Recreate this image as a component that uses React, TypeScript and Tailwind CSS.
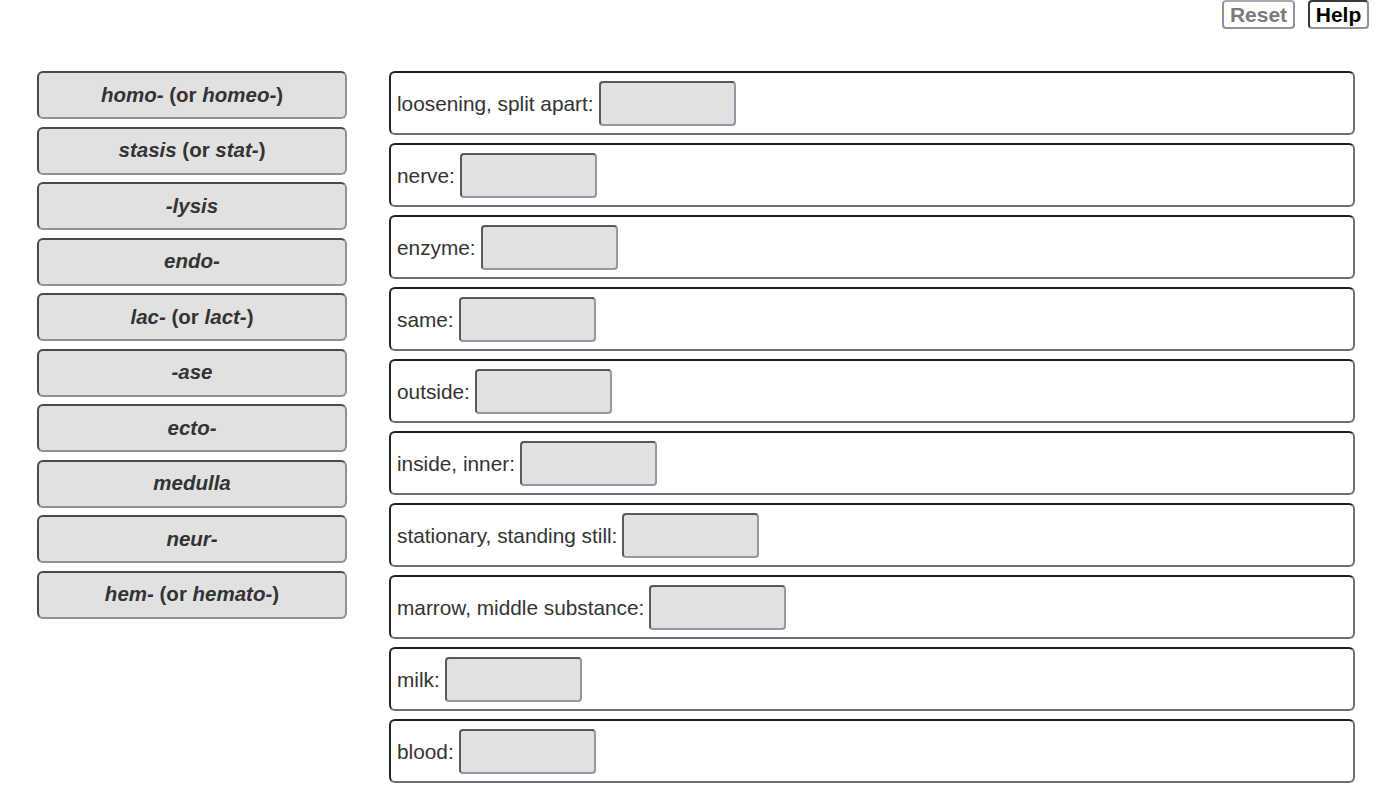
import React from "react";

const terms: { parts: { t: string; i?: boolean }[] }[] = [
  { parts: [{ t: "homo-", i: true }, { t: " (or " }, { t: "homeo-", i: true }, { t: ")" }] },
  { parts: [{ t: "stasis", i: true }, { t: " (or " }, { t: "stat-", i: true }, { t: ")" }] },
  { parts: [{ t: "-lysis", i: true }] },
  { parts: [{ t: "endo-", i: true }] },
  { parts: [{ t: "lac-", i: true }, { t: " (or " }, { t: "lact-", i: true }, { t: ")" }] },
  { parts: [{ t: "-ase", i: true }] },
  { parts: [{ t: "ecto-", i: true }] },
  { parts: [{ t: "medulla", i: true }] },
  { parts: [{ t: "neur-", i: true }] },
  { parts: [{ t: "hem-", i: true }, { t: " (or " }, { t: "hemato-", i: true }, { t: ")" }] },
];

const meanings = [
  "loosening, split apart:",
  "nerve:",
  "enzyme:",
  "same:",
  "outside:",
  "inside, inner:",
  "stationary, standing still:",
  "marrow, middle substance:",
  "milk:",
  "blood:",
];

export default function App() {
  return (
    <div className="min-h-screen w-full bg-white text-[#333] font-['Liberation_Sans',Arial,sans-serif]">
      <div className="flex justify-end gap-[13px] pr-[23px]">
        <button className="h-[29px] w-[73px] rounded-[4px] border-2 border-[#8f949b] border-t-[#a6aab0] text-[21px] leading-none font-bold text-[#7a7a7a] bg-white">
          Reset
        </button>
        <button className="h-[29px] w-[61px] rounded-[4px] border-2 border-[#3a3a3a] border-b-[#8f949b] border-r-[#8f949b] text-[21px] leading-none font-bold text-black bg-white">
          Help
        </button>
      </div>

      <div className="flex items-start gap-[42px] pl-[37px] pt-[42px]">
        <div className="flex flex-col gap-[7.5px] w-[310px]">
          {terms.map((term, idx) => (
            <div
              key={idx}
              className="h-[48px] flex items-center justify-center rounded-[6px] border-2 border-[#4a4a4a] border-b-[#8e9198] border-r-[#8e9198] bg-[#e1e1e1] text-[20.5px] font-bold text-[#333]"
            >
              <span>
                {term.parts.map((p, j) =>
                  p.i ? (
                    <i key={j}>{p.t}</i>
                  ) : (
                    <span key={j}>{p.t}</span>
                  )
                )}
              </span>
            </div>
          ))}
        </div>

        <div className="flex flex-col gap-[8px] w-[966px]">
          {meanings.map((m) => (
            <div
              key={m}
              className="h-[64px] flex items-center pl-[6px] rounded-[6px] border-2 border-[#222] border-b-[#6b7178] border-r-[#6b7178] bg-white"
            >
              <span className="text-[20.8px] text-[#333] pt-[2px]">{m}</span>
              <div className="ml-[5px] w-[137px] h-[45px] rounded-[4px] border-2 border-[#5a5a5e] border-b-[#9598a2] border-r-[#9598a2] bg-[#e1e1e1]" />
            </div>
          ))}
        </div>
      </div>
    </div>
  );
}
